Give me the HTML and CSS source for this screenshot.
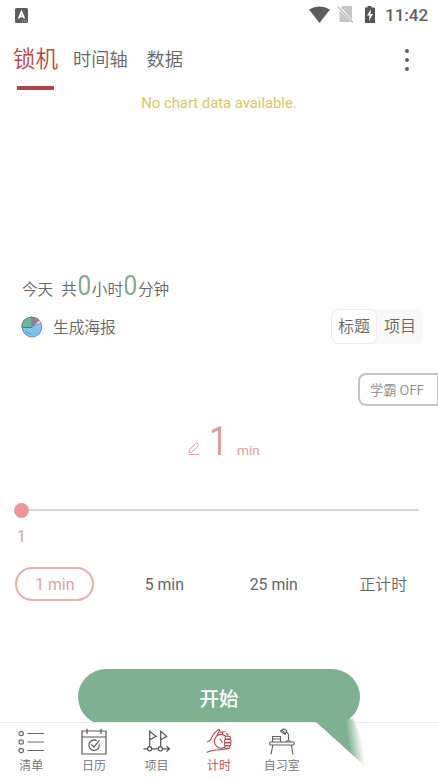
FILE: index.html
```html
<!DOCTYPE html>
<html lang="zh-CN">
<head>
<meta charset="utf-8">
<title>计时</title>
<link rel="stylesheet" href="styles.css">
</head>
<body>
<div class="screen">
  <header class="status">
    <svg class="status-app" width="13" height="15" viewBox="0 0 13 15"><rect width="13" height="15" rx="1.5" fill="#5e5e5e"/><path d="M3.7 10.5 6.5 3.8l2.8 6.7M4.8 8.3h3.4" fill="none" stroke="#fff" stroke-width="1.7"/><path d="M7 13h5" stroke="#ccc" stroke-dasharray="1 1"/></svg>
    <svg class="status-icons" width="68" height="20" viewBox="0 0 68 20"><path d="M0 4.5Q10.500-1.500 21 4.500L10.500 18Z" fill="#5c5c5c"/><path d="M32 2.500 34 1h8q1 0 1 1v12.500ZM30.500 5.500 42 17H31.500q-1 0-1-1Z" fill="#c6c6c6"/><path d="m29 2 15 15.500" stroke="#bdbdbd" stroke-width="1.300"/><path d="M56 2.500h2.500V1h4v1.500H66V18H56Z" fill="#555"/><path d="m62 4-4 6.500h2.500L60 16l4-7h-2.500Z" fill="#fff"/></svg>
    <span class="clock">11:42</span>
  </header>

  <nav class="tabs">
    <span class="tab tab-active">锁机</span>
    <span class="tab">时间轴</span>
    <span class="tab">数据</span>
    <span class="more"><i></i><i></i><i></i></span>
  </nav>

  <section class="chart">No chart data available.</section>

  <p class="total"><span class="today">今天</span>共<b>0</b>小时<b>0</b>分钟</p>

  <div class="poster-row">
    <svg width="22" height="22" viewBox="0 0 22 22"><circle cx="11" cy="11.300" r="9.700" fill="#7dc3f2" stroke="#6f90a6"/><path d="M11 11.500H.7Q.5 2 11 .8Z" fill="#6eb59c" stroke="#5b7f78"/><path d="M12 10V1.200q3.200.3 5.600 2.200Z" fill="#c4708a" stroke="#8e6c78" stroke-width=".8"/><path d="m13 10 5-5.700 2 2.600Z" fill="#f4d8dc" stroke="#9b7b8b" stroke-width=".7"/><path d="m5 15.500 3 2 3 .7" fill="none" stroke="#4885b3" stroke-dasharray="2 1"/></svg>
    <span class="poster">生成海报</span>
    <div class="segment"><span class="selected">标题</span><span>项目</span></div>
  </div>

  <div class="mode">学霸 OFF</div>

  <div class="duration">
    <svg width="12" height="13" viewBox="0 0 12 13" fill="none" stroke="#d9a09f"><path d="M1.500 7.800 7.700 1.500q.8-.8 1.600 0l.8.800q.8.800 0 1.600L4 10.100l-2.800.500ZM.5 12.400h10.800"/></svg>
    <strong>1</strong><span>min</span>
  </div>

  <div class="slider"><span class="thumb"></span><span class="track"></span></div>
  <div class="slider-value">1</div>

  <div class="presets">
    <span class="preset chosen">1 min</span><span class="preset">5 min</span><span class="preset">25 min</span><span class="preset count-up">正计时</span>
  </div>

  <div class="action">
    <button class="start">开始</button>
  </div>

  <footer class="bottom-nav">
    <a class="item"><svg width="28" height="28" viewBox="0 0 28 28"><g fill="none" stroke="#686868" stroke-width="1.200"><circle cx="4.200" cy="5.500" r="2.200"/><circle cx="4.200" cy="14" r="2.200"/><circle cx="4.200" cy="22.500" r="2.200"/><path d="M10.500 5.500H27M10.500 14H27M10.500 22.500H27"/></g></svg>清单</a>
    <a class="item"><svg width="28" height="28" viewBox="0 0 28 28"><g fill="none" stroke="#565656" stroke-width="1.200"><path d="M2 3h24v23H2ZM2 9h24M7 .8V6M21 .8V6M16.700 12.700a5.200 5.200 0 1 0 2.500 3.600M11.300 16.300l2.700 2.700 5.500-7"/></g></svg>日历</a>
    <a class="item"><svg width="28" height="28" viewBox="0 0 28 28"><g fill="none" stroke="#555" stroke-width="1.200"><path d="M7.700 18.500V3.300l6.300 5-6.300 3.500M18.700 18.500V3.300l6 5-6 3.500M1.500 20.800h4M9.700 20.800h6.500M20.500 20.800H27M24.500 18l3 2.800-3 2.800"/><circle cx="7.600" cy="20.800" r="2.100"/><circle cx="18.400" cy="20.800" r="2.100"/></g></svg>项目</a>
    <a class="item current"><svg width="28" height="28" viewBox="0 0 28 28"><g fill="none" stroke="#ad4b4d" stroke-width="1.100" stroke-linecap="round"><path d="M2.500 13.700C7 13 6 9 9 5.700l4.200-4q1.500-.8 1.400.9L12 7.500M2 24.200c5.500-2.700 8-1.900 12.500-2.400 3.500-.2 6.200-.8 8.500-1.800M20.500 8c-2.800-2.300-6.800-2.200-9.100.3-2.800 3-2.600 7.500.3 10.200 2.400 2 5.400 2.100 7.800.7M15 4.200l5-.4M17.500 4v2.500M21.500 5.500l1.700 1.700M15.200 11l2.100 3.300"/><rect x="20" y="8.200" width="5.600" height="3.200" rx="1.600"/><rect x="19.400" y="11.400" width="6.800" height="3.200" rx="1.600"/><rect x="19.400" y="14.600" width="6.600" height="3.200" rx="1.600"/><rect x="19.700" y="17.800" width="5.200" height="2.800" rx="1.400"/></g></svg>计时</a>
    <a class="item"><svg width="28" height="28" viewBox="0 0 28 28"><g fill="none" stroke="#606060" stroke-width="1.100"><rect x="1.700" y="14" width="24.500" height="3" rx="1"/><path d="M4.800 17 3 26.300M23.300 17l1.700 9.300M4.500 14V8.500h8V14M4.500 11h8M17.500 14q2.800-3 5.500 0M20.500 12V6.500l-2.200-3M12.500 3.200l3-2.200 3.300 1.500-1.700 4ZM14 2l3.500 4"/></g></svg>自习室</a>
    <svg class="smear" width="64" height="66" viewBox="0 0 64 66"><defs><linearGradient id="fade" gradientUnits="userSpaceOnUse" x1="30" y1="0" x2="44" y2="-2"><stop offset="0" stop-color="#7fb092"/><stop offset="1" stop-color="#7fb092" stop-opacity="0"/></linearGradient><filter id="soft"><feGaussianBlur stdDeviation=".6"/></filter></defs><path d="M2 8 30 3 39 5 50 30 53 54Z" fill="url(#fade)" filter="url(#soft)"/></svg>
  </footer>
</div>
</body>
</html>
```
FILE: styles.css
```css
* { box-sizing: border-box; }
body {
  margin: 0;
  background: #fefefe;
  color: #656565;
  font-family: Roboto, "Noto Sans CJK SC", sans-serif;
  font-size: 16px;
  font-weight: 350;
}
svg { display: block; flex: none; }
.screen {
  width: 438px;
  height: 780px;
  overflow: hidden;
  display: flex;
  flex-direction: column;
}
.screen > * { flex-shrink: 0; }
.status {
  height: 30px;
  display: flex;
  align-items: center;
  padding: 0 10px 0 15px;
}
.status-icons { margin-left: auto; }
.clock {
  width: 43px;
  margin-left: 8px;
  font-size: 17px;
  font-weight: 500;
  color: #606060;
  white-space: nowrap;
}
.tabs {
  height: 60px;
  display: flex;
  align-items: flex-start;
  padding: 0 27px 0 13px;
}
.tab {
  height: 60px;
  line-height: 59px;
  font-size: 18.2px;
  margin-right: 19px;
}
.tab-active {
  color: #bd4546;
  font-size: 22.5px;
  margin-right: 15px;
  background: linear-gradient(#ae4649, #ae4649) 4px 56px / 37px 4px no-repeat;
}
.more {
  margin: 19px 2px 0 auto;
  display: grid;
  gap: 5px;
}
.more i { width: 4px; height: 4px; border-radius: 50%; background: #5f5f5f; }
.chart {
  height: 180px;
  padding-top: 4px;
  text-align: center;
  font-size: 14.8px;
  font-weight: 400;
  line-height: 18px;
  color: #dfc65c;
}
.total {
  margin: -2px 0 0;
  height: 36px;
  padding-left: 22px;
  line-height: 36px;
  display: flex;
  align-items: baseline;
  font-size: 15.6px;
}
.today { margin-right: 8px; }
.total b {
  font-size: 28px;
  font-weight: 400;
  color: #7fae93;
  width: 15px;
  display: flex;
  justify-content: center;
  transform: scaleX(.88);
}
.poster-row {
  height: 45px;
  display: flex;
  align-items: center;
  padding: 0 15px 0 21px;
}
.poster { margin-left: 10px; font-size: 15.7px; }
.segment {
  display: flex;
  margin-left: auto;
  width: 92px;
  height: 35px;
  border-radius: 8px;
  background: #f8f8f8;
  line-height: 34px;
  text-align: center;
}
.segment span { width: 46px; border: 1px solid transparent; }
.segment .selected { background: #fff; border-color: #ececec; border-radius: 8px; }
.mode {
  margin: 24px 0 0 358px;
  width: 81px;
  height: 33px;
  border: 2px solid #c4c4c4;
  border-radius: 8px 0 0 8px;
  font: 350 13.3px/29px "Noto Sans CJK SC", sans-serif;
  padding-left: 10px;
  color: #8c8c8c;
}
.duration {
  height: 74px;
  display: flex;
  align-items: baseline;
  padding: 11px 0 0 188px;
  color: #df9e9c;
}
.duration strong {
  width: 25px;
  margin: 0 0 0 6px;
  text-align: center;
  font-size: 41px;
  font-weight: 400;
  line-height: 48px;
  transform: scaleX(.8);
}
.duration span { margin-left: 6px; font-size: 13.6px; font-weight: 400; }
.slider {
  height: 62px;
  padding: 0 19px 2px 14px;
  display: flex;
  align-items: center;
}
.thumb { width: 15px; height: 15px; border-radius: 50%; background: #ec9795; }
.track { flex: 1; height: 2px; background: #d7d7d7; }
.slider-value { height: 26px; margin-top: -18px; padding-left: 17px; line-height: 26px; font-weight: 400; color: #dca09e; }
.presets {
  display: grid;
  grid-template-columns: repeat(4, 109.5px);
  justify-items: center;
  margin-top: 17px;
}
.preset { width: 79px; height: 34px; line-height: 36px; font-size: 15.8px; font-weight: 400; text-align: center; }
.chosen { border: 2px solid #e2b0af; border-radius: 17px; line-height: 32px; color: #dfa09f; }
.count-up { font-weight: 350; }
.action {
  height: 121px;
  padding: 68px 0 0 78px;
  overflow: hidden;
}
.start {
  display: block;
  width: 282px;
  height: 56px;
  padding: 0;
  border: 0;
  border-radius: 28px;
  background: #7fb092;
  color: #fff;
  font: 500 19.5px "Noto Sans CJK SC", sans-serif;
}
.bottom-nav {
  position: relative;
  height: 58px;
  display: grid;
  grid-template-columns: repeat(5, 62.600px);
  border-top: 1px solid #eee;
}
.item {
  display: flex;
  flex-direction: column;
  align-items: center;
  padding-top: 5px;
  font-size: 12px;
  line-height: 20px;
  color: #707070;
}
.current { color: #ad4b4d; }
.smear { position: absolute; left: 314px; top: -9px; }
```
